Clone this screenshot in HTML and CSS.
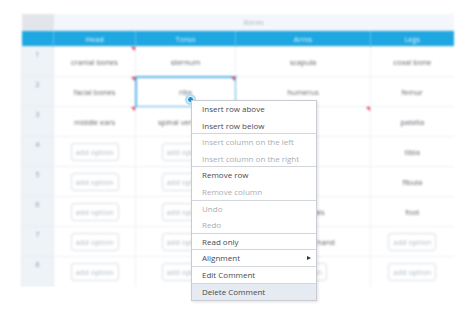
FILE: index.html
```html
<!DOCTYPE html>
<html lang="en">
<head>
    <meta charset="UTF-8">
    <title>Bones - context menu</title>
    <link rel="stylesheet" href="styles.css">
</head>
<body>
    <div class="sheet">
        <table class="grid">
            <colgroup>
                <col class="c-num"><col class="c-head"><col class="c-torso"><col class="c-arms"><col class="c-legs">
            </colgroup>
            <thead>
                <tr class="group-row">
                    <th class="corner"></th>
                    <th colspan="4" class="group">Bones</th>
                </tr>
                <tr class="col-row">
                    <th class="corner-blue"></th>
                    <th>Head</th>
                    <th>Torso</th>
                    <th>Arms</th>
                    <th>Legs</th>
                </tr>
            </thead>
            <tbody>
                <tr>
                    <td class="num">1</td>
                    <td class="note">cranial bones</td>
                    <td>sternum</td>
                    <td>scapula</td>
                    <td>coxal bone</td>
                </tr>
                <tr>
                    <td class="num">2</td>
                    <td class="note">facial bones</td>
                    <td class="selected note">ribs</td>
                    <td>humerus</td>
                    <td>femur</td>
                </tr>
                <tr>
                    <td class="num">3</td>
                    <td class="note">middle ears</td>
                    <td class="clip">spinal vert</td>
                    <td class="note"></td>
                    <td>patella</td>
                </tr>
                <tr>
                    <td class="num">4</td>
                    <td><span class="opt">add option</span></td>
                    <td><span class="opt">add option</span></td>
                    <td></td>
                    <td>tibia</td>
                </tr>
                <tr>
                    <td class="num">5</td>
                    <td><span class="opt">add option</span></td>
                    <td><span class="opt">add option</span></td>
                    <td></td>
                    <td>fibula</td>
                </tr>
                <tr>
                    <td class="num">6</td>
                    <td><span class="opt">add option</span></td>
                    <td><span class="opt">add option</span></td>
                    <td>metacarpals</td>
                    <td>foot</td>
                </tr>
                <tr>
                    <td class="num">7</td>
                    <td><span class="opt">add option</span></td>
                    <td><span class="opt">add option</span></td>
                    <td>bones of the hand</td>
                    <td><span class="opt">add option</span></td>
                </tr>
                <tr>
                    <td class="num">8</td>
                    <td><span class="opt">add option</span></td>
                    <td><span class="opt">add option</span></td>
                    <td><span class="opt">add option</span></td>
                    <td><span class="opt">add option</span></td>
                </tr>
            </tbody>
        </table>
    </div>

    <span class="fill-dot"></span>

    <ul class="menu">
        <li>Insert row above</li>
        <li class="sep">Insert row below</li>
        <li class="off">Insert column on the left</li>
        <li class="off sep">Insert column on the right</li>
        <li>Remove row</li>
        <li class="off sep">Remove column</li>
        <li class="off">Undo</li>
        <li class="off sep">Redo</li>
        <li class="sep">Read only</li>
        <li class="sep sub">Alignment</li>
        <li class="sep">Edit Comment</li>
        <li class="hover">Delete Comment</li>
    </ul>
</body>
</html>
```

FILE: styles.css
```css
body {
    margin: 0;
    background: #fff;
    font-family: "Open Sans", Arial, sans-serif;
}

.sheet {
    padding: 14px 0 0 21px;
    filter: blur(0.8px);
}

.grid {
    border-collapse: collapse;
    table-layout: fixed;
    width: 432px;
    font-size: 7.5px;
    color: #5d636a;
}
.c-num { width: 32px; }
.c-head { width: 82px; }
.c-torso { width: 100px; }
.c-arms { width: 135px; }
.c-legs { width: 83px; }

.grid th, .grid td {
    padding: 0;
    text-align: center;
    font-weight: normal;
}

.group-row th {
    height: 16px;
    background: #f3f7fb;
    border-bottom: 1px solid #e6ecf2;
}
.group-row .corner { background: #e2e6eb; }
.group-row .group {
    color: #a9b7c4;
    font-size: 7px;
}

.col-row th {
    height: 15px;
    background: #1ea7e1;
    color: #e8f6fd;
    border-right: 1px solid #5cc0ea;
}
.col-row th:last-child { border-right: none; }
.col-row .corner-blue { background: #1ea7e1; }

.grid tbody tr { height: 30px; }
.grid td {
    border: 1px solid #eef1f4;
    background: #fff;
    position: relative;
}
.grid td.clip {
    text-align: left;
    padding-left: 22px;
}
.grid td.num {
    background: #eef3f8;
    color: #8a96a3;
    vertical-align: top;
    padding-top: 2px;
    border-color: #e8edf2;
}
.grid tbody tr:last-child td { border-bottom: none; }
.grid td:last-child { border-right: none; }

.opt {
    display: inline-block;
    width: 46px;
    height: 16px;
    line-height: 16px;
    border: 1px solid #d9dfe6;
    border-radius: 3px;
    color: #b3bcc6;
}

.note::after {
    content: "";
    position: absolute;
    top: 0;
    right: 0;
    border-top: 4px solid #e0314b;
    border-left: 4px solid transparent;
}

.grid td.selected {
    outline: 2px solid #5ab5e8;
    outline-offset: -1px;
}

.fill-dot {
    position: absolute;
    left: 187px;
    top: 96px;
    width: 5px;
    height: 5px;
    border-radius: 50%;
    background: #1a8fc9;
    border: 1px solid #fff;
    box-shadow: 0 0 0 2px #b6dcf3;
}

.menu {
    position: absolute;
    left: 191px;
    top: 100px;
    width: 124px;
    margin: 0;
    padding: 0;
    list-style: none;
    background: #fff;
    border: 1px solid #c8ccd2;
    box-shadow: 1px 1px 3px rgba(0,0,0,0.12);
    font-size: 8px;
    color: #464b52;
}
.menu li {
    height: 16.6px;
    line-height: 16.6px;
    padding-left: 10px;
    position: relative;
    white-space: nowrap;
}
.menu li.sep { border-bottom: 1px solid #d3d7dc; height: 15.6px; }
.menu li.off { color: #a9aeb4; }
.menu li.hover { background: #e6eaf1; }
.menu li.sub::after {
    content: "";
    position: absolute;
    right: 5px;
    top: 6px;
    border-left: 4px solid #333;
    border-top: 2.5px solid transparent;
    border-bottom: 2.5px solid transparent;
}
```
